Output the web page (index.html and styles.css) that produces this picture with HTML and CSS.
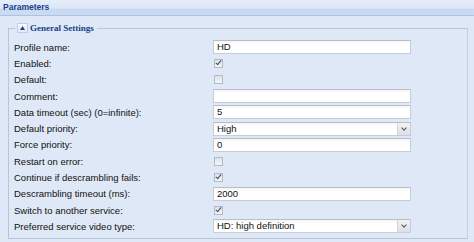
FILE: index.html
```html
<!DOCTYPE html>
<html lang="en">

<head>
    <meta charset="UTF-8">
    <meta name="viewport" content="width=device-width, initial-scale=1.0">
    <title>Parameters</title>
    <link rel="stylesheet" href="styles.css">
</head>

<body>
    <div class="panel">
        <div class="panel-header">Parameters</div>
        <div class="panel-body">
            <fieldset class="settings">
                <legend><span class="toggle"><svg width="5" height="4" viewBox="0 0 5 4"><path d="M0 4 L2.5 0 L5 4 Z" fill="#15428b"/></svg></span>General Settings</legend>

                <div class="row"><label>Profile name:</label><div class="field">HD</div></div>
                <div class="row"><label>Enabled:</label><span class="check on"></span></div>
                <div class="row"><label>Default:</label><span class="check"></span></div>
                <div class="row"><label>Comment:</label><div class="field"></div></div>
                <div class="row"><label>Data timeout (sec) (0=infinite):</label><div class="field">5</div></div>
                <div class="row"><label>Default priority:</label><div class="field combo">High<span class="trigger"></span></div></div>
                <div class="row"><label>Force priority:</label><div class="field">0</div></div>
                <div class="row"><label>Restart on error:</label><span class="check"></span></div>
                <div class="row"><label>Continue if descrambling fails:</label><span class="check on"></span></div>
                <div class="row"><label>Descrambling timeout (ms):</label><div class="field">2000</div></div>
                <div class="row"><label>Switch to another service:</label><span class="check on"></span></div>
                <div class="row"><label>Preferred service video type:</label><div class="field combo">HD: high definition<span class="trigger"></span></div></div>
            </fieldset>
        </div>
    </div>
</body>

</html>
```

FILE: styles.css
```css
body {
    font-family: "Liberation Sans", Arial, sans-serif;
    font-size: 9.5px;
    margin: 0;
    padding: 0;
    background-color: #dfe8f6;
    color: #111;
}

.panel-header {
    height: 15px;
    line-height: 15px;
    padding-left: 3px;
    font-weight: bold;
    font-size: 8.5px;
    color: #15428b;
    border-bottom: 1px solid #a9c2e6;
    background: linear-gradient(#e6eef9 0%, #dbe6f5 55%, #c9d9f0 60%, #ccdcf1 100%);
}

.panel-body {
    padding: 0 6px 0 8px;
}

.settings {
    margin: 7px 0 0 0;
    padding: 6px 0 3px 5px;
    border: 1px solid #b9c4d6;
    border-right-color: #c4cfdf;
    min-width: 0;
}

.settings legend {
    padding: 0 3px 0 2px;
    margin-left: 1px;
    font-weight: bold;
    font-family: "Liberation Serif", serif;
    font-size: 9px;
    color: #15428b;
    display: flex;
    align-items: center;
    gap: 2px;
}

.toggle {
    width: 9px;
    height: 8px;
    border: 1px solid #c2cde0;
    background: linear-gradient(#f7f9fd, #e3eaf5);
    display: flex;
    align-items: center;
    justify-content: center;
}

.row {
    height: 16.3px;
    display: flex;
    align-items: center;
}

.row label {
    width: 199px;
    flex-shrink: 0;
}

.field {
    width: 193px;
    height: 12px;
    line-height: 12px;
    padding-left: 3px;
    border: 1px solid #c7ccd6;
    border-top-color: #b8bdc8;
    background: linear-gradient(#f4f4f4 0, #fff 3px);
    position: relative;
}

.combo .trigger {
    position: absolute;
    right: 0;
    top: 0;
    width: 12px;
    height: 12px;
    border-left: 1px solid #d0d4dc;
    background: linear-gradient(#f2f3f5, #dcdfe4);
}

.combo .trigger::after {
    content: "";
    position: absolute;
    left: 4px;
    top: 3px;
    width: 3px;
    height: 3px;
    border-right: 1.3px solid #556;
    border-bottom: 1.3px solid #556;
    transform: rotate(45deg);
}

.check {
    margin-left: 1px;
    width: 7px;
    height: 7px;
    border: 1px solid #b4bac5;
    background: linear-gradient(#dde1e7, #f4f5f7);
    position: relative;
}

.check.on::after {
    content: "";
    position: absolute;
    left: 2px;
    top: -1px;
    width: 2px;
    height: 5px;
    border-right: 1.2px solid #3a4a6a;
    border-bottom: 1.2px solid #3a4a6a;
    transform: rotate(40deg);
}
```
